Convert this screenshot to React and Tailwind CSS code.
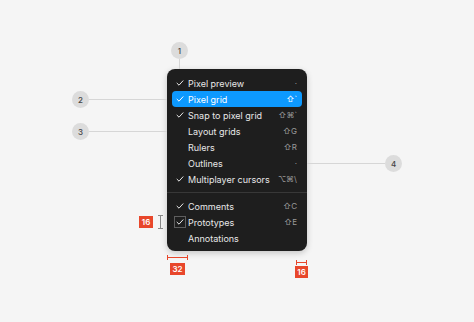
import React from "react";

const Check = () => (
  <svg width="8" height="8" viewBox="0 0 8 8" fill="none">
    <path d="M1 4.2 L3 6.2 L7 1.8" stroke="currentColor" strokeWidth="1" strokeLinecap="round" strokeLinejoin="round" />
  </svg>
);

const items = [
  { label: "Pixel preview", check: true, key: "·" },
  { label: "Pixel grid", check: true, key: "⇧`", active: true },
  { label: "Snap to pixel grid", check: true, key: "⇧⌘`" },
  { label: "Layout grids", key: "⇧G" },
  { label: "Rulers", key: "⇧R" },
  { label: "Outlines", key: "·" },
  { label: "Multiplayer cursors", check: true, key: "⌥⌘\\" },
];

const items2 = [
  { label: "Comments", check: true, key: "⇧C" },
  { label: "Prototypes", check: true, key: "⇧E", box: true },
  { label: "Annotations" },
];

const Row = ({ item }) => (
  <div
    className={`flex h-4 items-center gap-[4px] rounded-[4px] pl-[4px] pr-[5px] ${
      item.active ? "bg-[#0d99ff] text-white" : "text-[#e8e8e8]"
    }`}
  >
    <div className="relative flex h-full w-[8px] items-center justify-center">
      {item.box && (
        <div className="absolute left-[-2px] top-1/2 h-[12px] w-[12px] -translate-y-1/2 border border-[#5e5e5e]" />
      )}
      {item.check && <Check />}
    </div>
    <span className="text-[9px] leading-none">{item.label}</span>
    <span
      className={`ml-auto text-[8px] leading-none ${
        item.active ? "text-white" : "text-[#9a9a9a]"
      }`}
    >
      {item.key}
    </span>
  </div>
);

const Badge = ({ n }) => (
  <div className="flex h-[17px] w-[17px] shrink-0 items-center justify-center rounded-full bg-[#dcdcdc] text-[8px] font-medium text-[#444]">
    {n}
  </div>
);

const Tag = ({ n, w }) => (
  <div
    className={`flex h-[12px] ${w} items-center justify-center bg-[#e8472b] text-[8px] font-semibold leading-none text-white`}
  >
    {n}
  </div>
);

const HMeasure = ({ w }) => (
  <div className={`flex h-[5px] ${w} items-center border-x border-[#e8472b]`}>
    <div className="h-px w-full bg-[#e8472b]" />
  </div>
);

export default function App() {
  return (
    <div
      className="relative h-[322px] w-[474px] overflow-hidden bg-[#f5f5f5]"
      style={{ fontFamily: "Inter, 'Noto Sans', sans-serif" }}
    >
      {/* callout 1 */}
      <div className="absolute left-[171px] top-[42px] flex flex-col items-center">
        <Badge n="1" />
        <div className="h-[10px] w-px bg-[#d6d6d6]" />
      </div>

      {/* callouts 2 and 3 */}
      <div className="absolute left-[72px] top-[91px] flex flex-col gap-[15px]">
        {["2", "3"].map((n) => (
          <div key={n} className="flex items-center">
            <Badge n={n} />
            <div className="h-px w-[78px] bg-[#d6d6d6]" />
          </div>
        ))}
      </div>

      {/* callout 4 */}
      <div className="absolute left-[307px] top-[155px] flex items-center">
        <div className="h-px w-[78px] bg-[#d6d6d6]" />
        <Badge n="4" />
      </div>

      <div className="pl-[167px] pt-[69px]">
        <div className="w-[140px] rounded-[8px] bg-[#1e1e1e] px-[5px] pb-[5px] pt-[6px] shadow-[0_2px_6px_rgba(0,0,0,0.2)]">
          {items.map((it) => (
            <Row key={it.label} item={it} />
          ))}
          <div className="-mx-[5px] my-[5px] h-px bg-[#383838]" />
          {items2.map((it) => (
            <Row key={it.label} item={it} />
          ))}
        </div>
      </div>

      {/* spacing annotations */}
      <div className="absolute left-[139px] top-[215px] flex items-center gap-[5px]">
        <Tag n="16" w="w-[14px]" />
        <div className="flex h-[14px] w-[5px] flex-col items-center justify-between border-y border-[#8a8a8a]">
          <div className="h-full w-px bg-[#8a8a8a]" />
        </div>
      </div>

      <div className="absolute left-[167px] top-[255px] flex flex-col items-center gap-[3px]">
        <HMeasure w="w-[21px]" />
        <Tag n="32" w="w-[15px]" />
      </div>

      <div className="absolute left-[295px] top-[260px] flex flex-col items-center gap-[1px]">
        <HMeasure w="w-[11px]" />
        <Tag n="16" w="w-[13px]" />
      </div>
    </div>
  );
}
